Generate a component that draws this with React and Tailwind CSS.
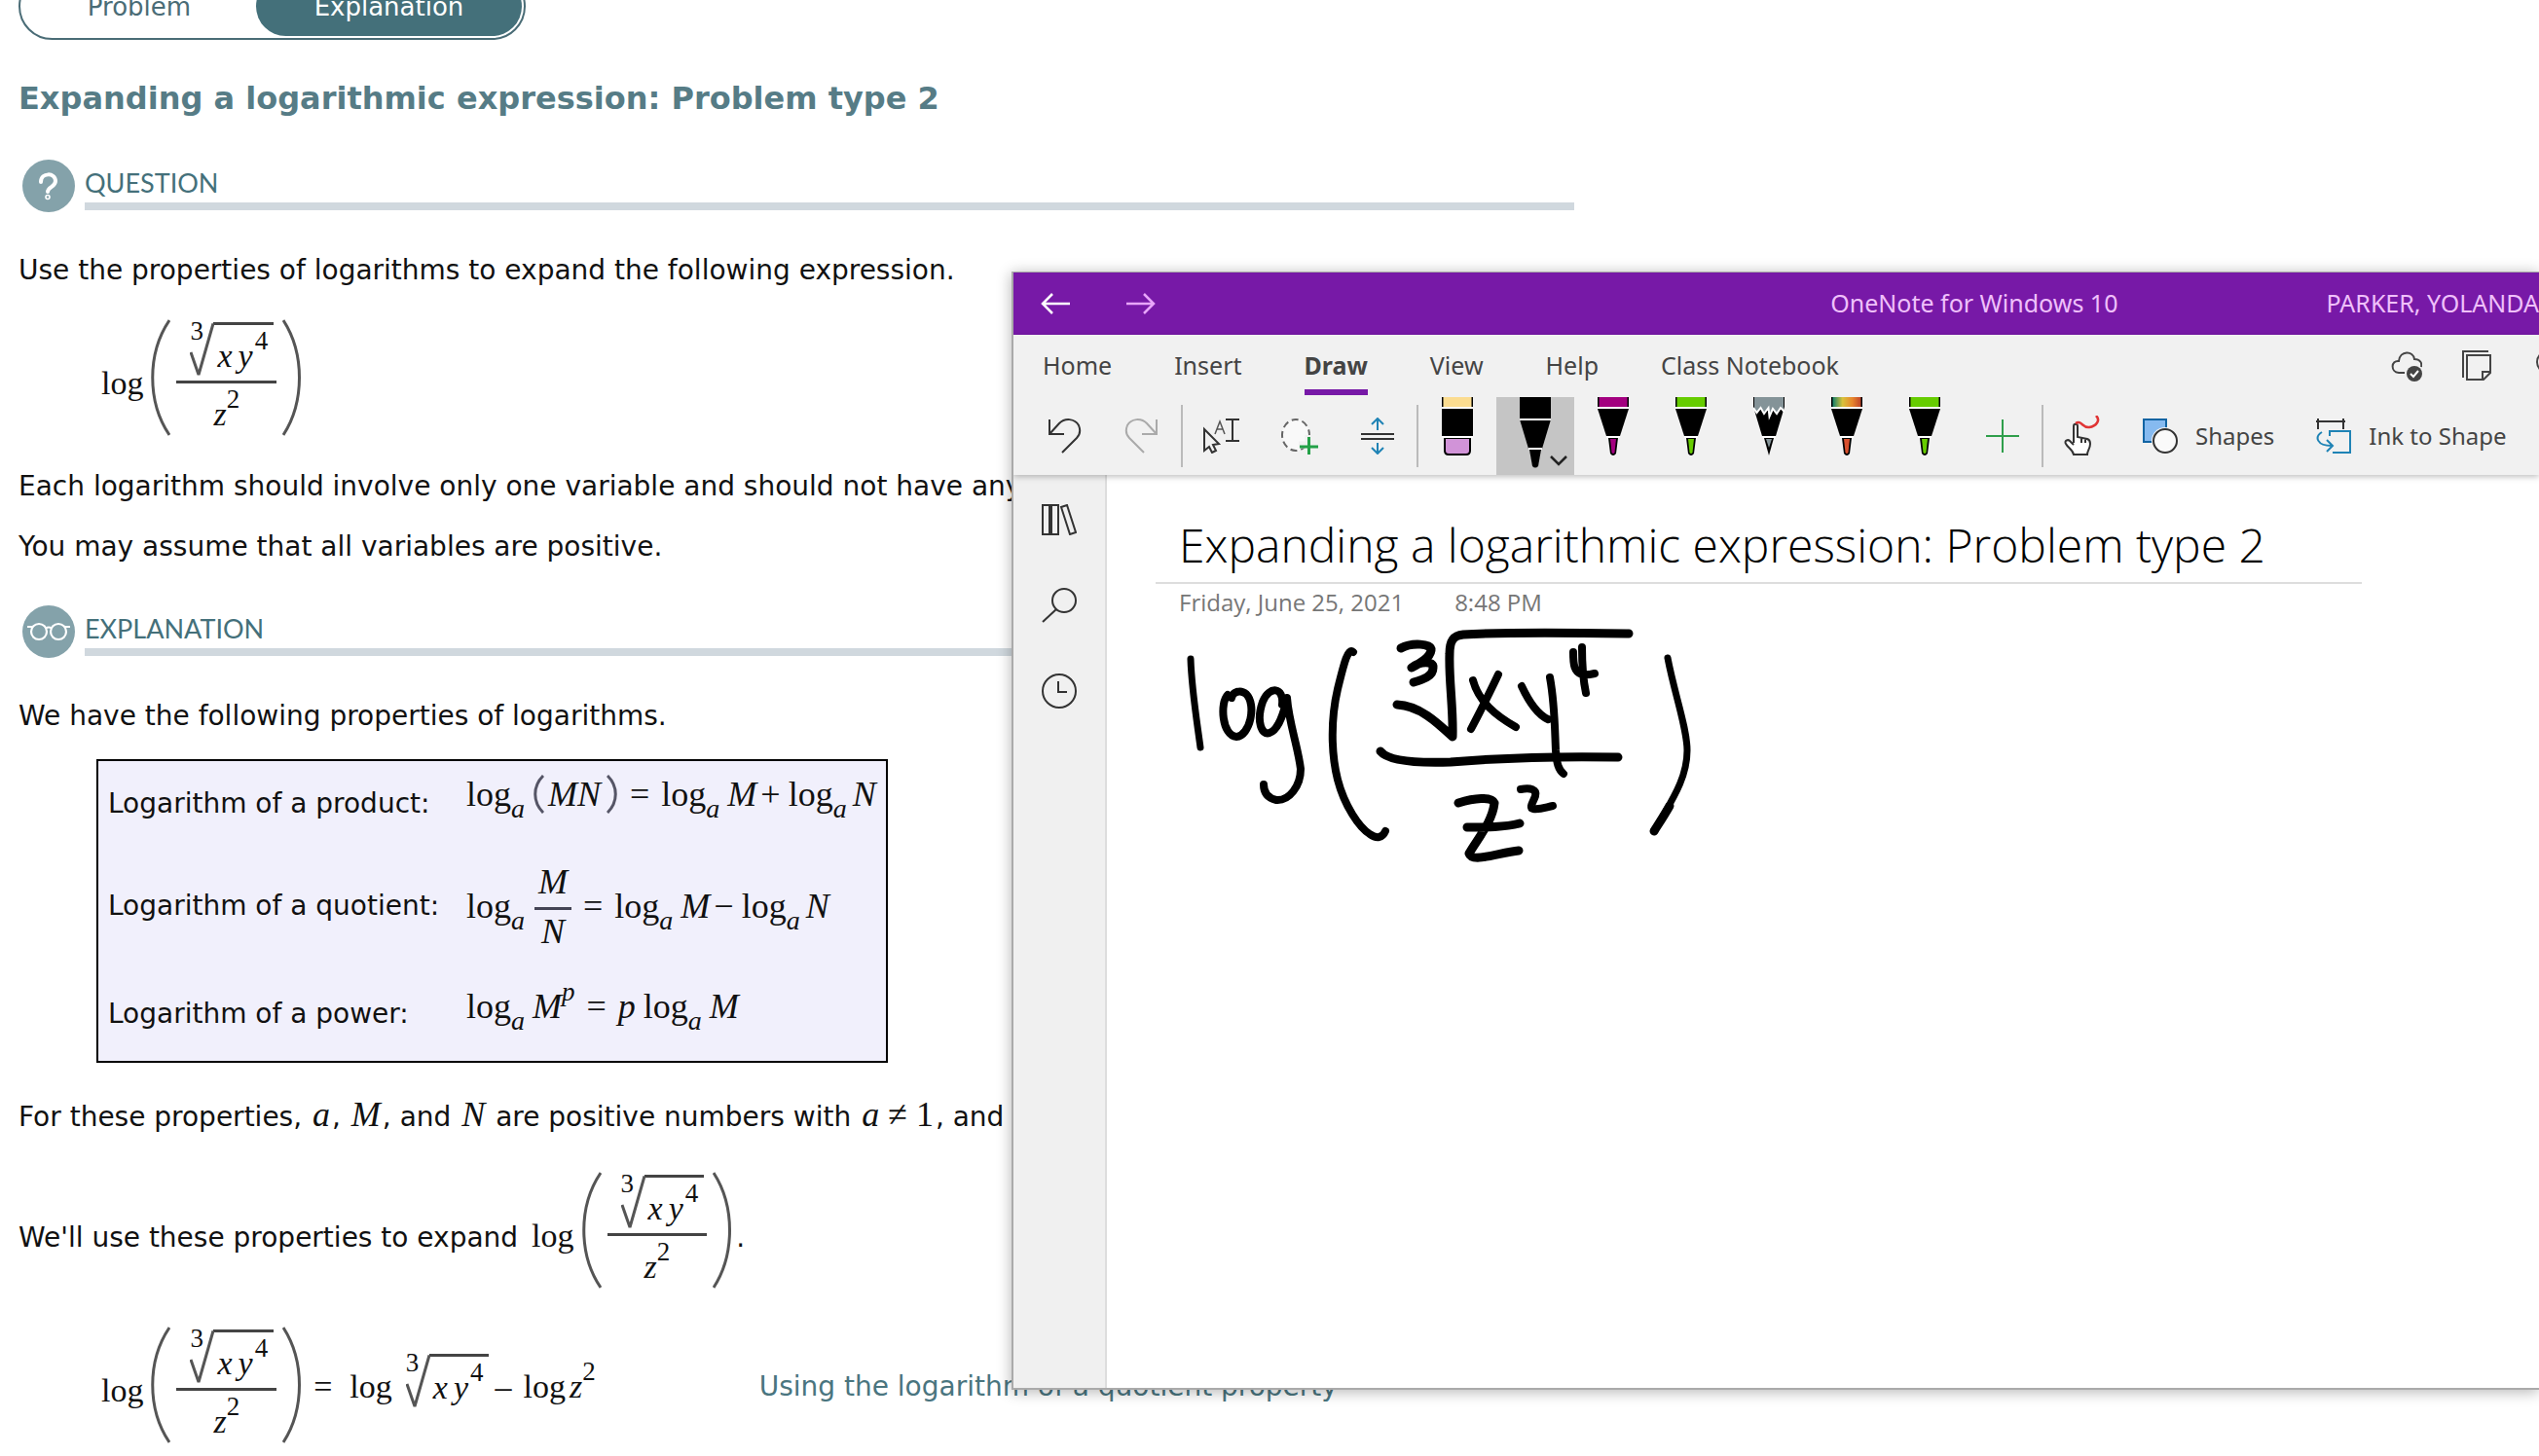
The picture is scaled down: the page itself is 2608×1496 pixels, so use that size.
// App.jsx
import React from 'react';

/* ---------- Math building blocks ---------- */

const Var = ({ children, className = '' }) => <i className={className}>{children}</i>;

const Sup = ({ children }) => (
  <sup className="static text-[27px] leading-[0] align-[18px]">{children}</sup>
);

const LogA = () => (
  <span>
    log<sub className="static text-[28px] leading-[0] align-[-12px] italic">a</sub>
  </span>
);

const Paren = ({ right = false }) => (
  <svg width="20" height="120" viewBox="0 0 20 120" fill="none" stroke="#555" strokeWidth="3" aria-hidden="true">
    <path d={right ? 'M1 1C23 35 23 85 1 119' : 'M19 1C-4 35 -4 85 19 119'} />
  </svg>
);

// Cube root of x y^4
const CubeRoot = () => (
  <span className="flex items-start">
    <span className="relative block w-6 shrink-0">
      <svg width="25" height="56" viewBox="0 0 25 56" fill="none" stroke="#555" strokeWidth="3" aria-hidden="true">
        <path d="M1 31L9 54L24 1.5" strokeLinejoin="bevel" />
      </svg>
      <span className="absolute left-0 -top-1 text-[27px] leading-none">3</span>
    </span>
    <span className="block border-t-3 border-[#444] pt-3 pl-1 pr-1.5 leading-10">
      <Var className="mr-1.5">x</Var>
      <Var className="mr-0.5">y</Var>
      <Sup>4</Sup>
    </span>
  </span>
);

const LogOfFraction = () => (
  <span className="flex items-center font-['Liberation_Serif',serif] text-[34px] leading-10">
    <span className="pt-3 mr-2">log</span>
    <Paren />
    <span className="mx-1.5 flex flex-col items-center">
      <span className="border-b-3 border-[#444] pl-3.5 pr-[3px] pb-1">
        <CubeRoot />
      </span>
      <span className="pt-3">
        <Var>z</Var>
        <Sup>2</Sup>
      </span>
    </span>
    <Paren right />
  </span>
);

/* ---------- Left page ---------- */

const SectionHeader = ({ icon, children }) => (
  <div className="mt-10 ml-1 flex max-w-[1594px] items-end gap-2.5">
    <svg width="54" height="54" viewBox="0 0 54 54" className="shrink-0" aria-hidden="true">
      <circle cx="27" cy="27" r="27" fill="#84a2aa" />
      {icon}
    </svg>
    <div className="mb-0.5 grow border-b-8 border-[#d0d8de]">
      <h2 className="pb-1 font-['Lato',sans-serif] text-[27px] leading-8 text-[#44707a]">{children}</h2>
    </div>
  </div>
);

const QuestionMark = (
  <g fill="none" stroke="#fff" strokeWidth="4" strokeLinecap="round">
    <path d="M19 23C19 13 34 13 34 22C34 28 26 28 26 33" />
    <circle cx="26" cy="38.500" r="0.800" />
  </g>
);

const Glasses = (
  <g fill="none" stroke="#fff" strokeWidth="2.2">
    <circle cx="17" cy="27" r="8" />
    <circle cx="37" cy="27" r="8" />
    <path d="M5 22H11M43 22H49M24 23.500Q27 21.500 30 23.500" />
  </g>
);

const PropertiesTable = () => (
  <table className="mt-6 ml-20 w-[813px] table-fixed border-2 border-black bg-[#f1f0fc]">
    <tbody className="[&_td]:font-['Liberation_Serif',serif] [&_td]:text-[36px] [&_th]:w-[379px] [&_th]:pl-[10px] [&_th]:text-left [&_th]:font-normal">
      <tr className="h-[88px]">
        <th scope="row">Logarithm of a product:</th>
        <td className="pb-5">
          <span className="flex items-center leading-10 whitespace-nowrap">
            <LogA />
            <svg width="12" height="40" viewBox="0 0 12 40" className="ml-2 mr-1" fill="none" stroke="#556" strokeWidth="3" aria-hidden="true">
              <path d="M11 1C0 12 0 28 11 39" />
            </svg>
            <Var>MN</Var>
            <svg width="12" height="40" viewBox="0 0 12 40" className="ml-1.5" fill="none" stroke="#556" strokeWidth="3" aria-hidden="true">
              <path d="M1 1C12 12 12 28 1 39" />
            </svg>
            <span className="mx-3">=</span>
            <LogA />
            <Var className="ml-2">M</Var>
            <span className="ml-1 mr-2">+</span>
            <LogA />
            <Var className="ml-1.5">N</Var>
          </span>
        </td>
      </tr>
      <tr className="h-[124px]">
        <th scope="row">Logarithm of a quotient:</th>
        <td>
          <span className="flex items-center leading-10 whitespace-nowrap">
            <LogA />
            <span className="ml-2.5 flex flex-col items-center">
              <Var className="border-b-3 border-[#445] px-1 pb-1.5">M</Var>
              <Var className="pt-0.5">N</Var>
            </span>
            <span className="mx-3">=</span>
            <LogA />
            <Var className="ml-2">M</Var>
            <span className="ml-1 mr-2">−</span>
            <LogA />
            <Var className="ml-1.5">N</Var>
          </span>
        </td>
      </tr>
      <tr className="h-[98px]">
        <th scope="row">Logarithm of a power:</th>
        <td className="pb-4">
          <span className="flex items-center leading-10 whitespace-nowrap">
            <LogA />
            <span className="ml-2 italic">
              M<Sup>p</Sup>
            </span>
            <span className="mx-3">=</span>
            <Var className="mr-2">p</Var>
            <LogA />
            <Var className="ml-2">M</Var>
          </span>
        </td>
      </tr>
    </tbody>
  </table>
);

const Serif = ({ children }) => (
  <span className="mx-0.5 font-['Liberation_Serif',serif] text-[36px] leading-[0]">{children}</span>
);

const LessonPage = () => (
  <main className="px-[19px] pb-3 font-['DejaVu_Sans',sans-serif] text-[28px] leading-10 text-[#111]">
    <nav className="-mt-7 flex h-[69px] w-[521px] rounded-full border-2 border-[#4a6c76] p-0.5 text-[26px]">
      <button type="button" className="grow text-[#4a6c76]">Problem</button>
      <button type="button" className="w-[273px] rounded-full bg-[#44707a] text-white">Explanation</button>
    </nav>

    <h1 className="mt-10 pb-[3px] text-[32px] font-bold text-[#567c86]">
      Expanding a logarithmic expression: Problem type 2
    </h1>

    <SectionHeader icon={QuestionMark}>QUESTION</SectionHeader>
    <p className="mt-10">Use the properties of logarithms to expand the following expression.</p>
    <div className="mt-[30px] ml-[85px]">
      <LogOfFraction />
    </div>
    <p className="mt-8">
      Each logarithm should involve only one variable and should not have any radicals or exponents.
    </p>
    <p className="mt-[22px]">You may assume that all variables are positive.</p>

    <SectionHeader icon={Glasses}>EXPLANATION</SectionHeader>
    <p className="mt-10">We have the following properties of logarithms.</p>
    <PropertiesTable />
    <p className="mt-9">
      For these properties, <Serif><i>a</i></Serif>, <Serif><i>M</i></Serif>, and <Serif><i>N</i></Serif> are
      positive numbers with <Serif><i>a</i> ≠ 1</Serif>, and <Serif><i>p</i></Serif> is any real number.
    </p>
    <div className="mt-9 flex items-center">
      <span className="mr-3.5 pt-4">We'll use these properties to expand</span>
      <LogOfFraction />
      <span className="ml-1 pt-4">.</span>
    </div>
    <div className="mt-[39px] ml-[85px] flex items-center">
      <LogOfFraction />
      <span className="flex items-center pt-1 font-['Liberation_Serif',serif] text-[34px]">
        <span className="ml-3 mr-[18px]">=</span>
        <span className="mr-3.5">log</span>
        <span className="pb-3">
          <CubeRoot />
        </span>
        <span className="ml-1.5 mr-3">–</span>
        <span>
          log<Var className="ml-1">z</Var>
          <Sup>2</Sup>
        </span>
      </span>
      <span className="ml-[168px] pt-1 text-[#4a757f]">Using the logarithm of a quotient property</span>
    </div>
  </main>
);

/* ---------- OneNote window ---------- */

const menuTabs = ['Home', 'Insert', 'Draw', 'View', 'Help', 'Class Notebook'];

const pens = [
  { id: 'Magenta pen', cap: '#a3007f', tip: '#a3007f' },
  { id: 'Green pen', cap: '#66cc00', tip: '#66cc00' },
  { id: 'Pencil', cap: '#849398', tip: '#849398', pencil: true },
  { id: 'Rainbow pen', cap: 'url(#rainbow)', tip: '#d8502e' },
  { id: 'Lime pen', cap: '#66cc00', tip: '#66cc00' },
];

const Pen = ({ pen }) => (
  <svg width="32" height="60" viewBox="0 0 32 60" aria-hidden="true">
    <defs>
      <linearGradient id="rainbow">
        <stop offset="0" stopColor="#12806a" />
        <stop offset="0.350" stopColor="#d9c23a" />
        <stop offset="0.700" stopColor="#e8852c" />
        <stop offset="1" stopColor="#c0442a" />
      </linearGradient>
    </defs>
    <path d="M0 0H32V10H0Z" fill="#000" />
    <path d="M1.500 0H30.500V10H1.500Z" fill={pen.cap} />
    {pen.pencil ? (
      <>
        <path d="M0 10H32L23 40H9Z" fill="#000" />
        <path d="M1 0H31V15L28 11L24 17L20 12L16.500 20L15.500 11L11 17L7.500 11L3.500 16L1 12Z" fill={pen.cap} />
        <path d="M0 11L3.500 16L7.500 11L11 17L15.500 11L16.500 20L20 12L24 17L28 11L32 15" fill="none" stroke="#fff" strokeWidth="2" />
        <path d="M11 42H21L16 60Z" fill="#000" />
        <path d="M13 43H19L16 52Z" fill={pen.tip} />
      </>
    ) : (
      <>
        <path d="M0 12H32L23 40H9Z" fill="#000" />
        <path d="M11 42H21L19 58Q16 62 13 58Z" fill="#000" />
        <path d="M13 43H19L17.500 57Q16 59 14.500 57Z" fill={pen.tip} />
      </>
    )}
    <path d="M9 41H23" stroke="#fff" strokeWidth="2" />
    {!pen.pencil && <path d="M0 11H32" stroke="#fff" strokeWidth="2" />}
  </svg>
);

const ToolButton = ({ label, children, className = 'items-center' }) => (
  <button type="button" aria-label={label} className={`flex h-20 w-20 shrink-0 justify-center ${className}`}>
    {children}
  </button>
);

const Divider = () => <span className="mt-2 h-16 w-0.5 shrink-0 bg-[#bbb]" />;

const Icon = ({ w = 36, h = 36, children }) => (
  <svg
    width={w}
    height={h}
    viewBox={`0 0 ${w} ${h}`}
    fill="none"
    stroke="#333"
    strokeWidth="2"
    className="shrink-0"
    aria-hidden="true"
  >
    {children}
  </svg>
);

const TitleBar = () => (
  <header className="flex h-16 items-center bg-[#7719a7] pl-7 text-[25px] text-[#efc0fb]">
    <button type="button" aria-label="Back">
      <Icon w={30} h={24}>
        <path d="M30 12H2M12 2L2 12L12 22" stroke="#fff" strokeWidth="2.500" />
      </Icon>
    </button>
    <button type="button" aria-label="Forward" className="ml-[58px]">
      <Icon w={30} h={24}>
        <path d="M0 12H28M18 2L28 12L18 22" stroke="#e8a6fa" strokeWidth="2.500" />
      </Icon>
    </button>
    <span className="ml-auto">OneNote for Windows 10</span>
    <span className="ml-[214px]">PARKER, YOLANDA</span>
  </header>
);

const MenuRow = () => (
  <div className="flex h-16 items-start overflow-hidden pl-[30px] text-[25px] text-[#444]">
    <nav className="flex gap-16">
      {menuTabs.map((tab) => (
        <button
          key={tab}
          type="button"
          className={
            tab === 'Draw'
              ? 'h-[62px] border-t-8 border-b-6 border-t-transparent border-b-[#7719a7] font-bold'
              : 'h-[62px] border-t-8 border-b-6 border-transparent'
          }
        >
          {tab}
        </button>
      ))}
    </nav>
    <div className="ml-auto flex gap-10 pt-4">
      <button type="button" aria-label="Sync status">
        <Icon w={32} h={32}>
          <path d="M14 23H8C-1 22 0 10 8 11C9 0 23 0 24 9C30 9 32 13 31 17" stroke="#444" />
          <circle cx="24" cy="24" r="8" fill="#444" stroke="none" />
          <path d="M20 24L23 27L28 21" stroke="#fff" />
        </Icon>
      </button>
      <button type="button" aria-label="Full page view">
        <Icon w={32} h={32}>
          <path d="M2 28V1H28" stroke="#444" />
          <path d="M6 5H30V23L23 30H6ZM30 22H22V30" stroke="#444" />
        </Icon>
      </button>
      <button type="button" aria-label="Tips" className="ml-1 -mr-7">
        <Icon w={32} h={32}>
          <circle cx="13" cy="12" r="11" stroke="#444" />
        </Icon>
      </button>
    </div>
  </div>
);

const DrawToolbar = () => (
  <div className="flex h-20 overflow-hidden pl-3 text-[24px] text-[#444]">
    <ToolButton label="Undo">
      <Icon>
        <path d="M3 1V16H18M3 16L13 5C19 -1 29 0 33 7C35 12 34 17 31 20L16 35" />
      </Icon>
    </ToolButton>
    <ToolButton label="Redo">
      <Icon>
        <path d="M33 1V16H18M33 16L23 5C17 -1 7 0 3 7C1 12 2 17 5 20L20 35" stroke="#aaa" />
      </Icon>
    </ToolButton>
    <Divider />
    <ToolButton label="Select objects or type text">
      <Icon w={38}>
        <path d="M1 11V33L6 29L9 35L13 33L10 27L16 26Z" />
        <path d="M12 16L17 3L22 16M14 11H20" stroke="#555" strokeWidth="1.500" />
        <path d="M23 1H37M23 23H37M30 1V23" />
      </Icon>
    </ToolButton>
    <ToolButton label="Lasso select">
      <Icon w={38} h={38}>
        <ellipse cx="15" cy="18" rx="14" ry="16" fill="#f9f9f9" stroke="#666" strokeDasharray="7 4" />
        <path d="M18 28H38M28 18V38" stroke="#f1f1f1" strokeWidth="7" />
        <path d="M19 30H38M28.500 20V38" stroke="#24a148" strokeWidth="3" />
      </Icon>
    </ToolButton>
    <ToolButton label="Insert or remove space">
      <Icon w={34} h={38}>
        <path d="M0 17H34M0 22H34" />
        <path d="M17 13V1M11 7L17 1L23 7M17 26V37M11 31L17 37L23 31" stroke="#1f83b5" />
      </Icon>
    </ToolButton>
    <Divider />
    <ToolButton label="Eraser" className="items-start">
      <svg width="32" height="60" viewBox="0 0 32 60" aria-hidden="true">
        <path d="M0 0H32V10H0ZM0 12H32V40H0Z" fill="#000" />
        <path d="M1.500 0H30.500V10H1.500Z" fill="#fbdc90" />
        <path d="M3 42H29V55Q29 59 25 59H7Q3 59 3 55Z" fill="#d193d8" stroke="#000" strokeWidth="2" />
        <path d="M0 11H32M0 41H32" stroke="#fff" strokeWidth="2" />
      </svg>
    </ToolButton>
    <ToolButton label="Black pen" className="items-start bg-[#c5c5c5]">
      <svg width="80" height="80" viewBox="0 0 80 80" aria-hidden="true">
        <path d="M24 0H56V23L47 53H33L24 23Z" fill="#000" />
        <path d="M34 54H46L43 71Q40 74 37 71Z" fill="#000" />
        <path d="M24 23H56M33 53H47" stroke="#fff" strokeWidth="2" />
        <path d="M56 61L64 69L72 61" fill="none" stroke="#222" strokeWidth="2.500" />
      </svg>
    </ToolButton>
    {pens.map((pen) => (
      <ToolButton key={pen.id} label={pen.id} className="items-start">
        <Pen pen={pen} />
      </ToolButton>
    ))}
    <ToolButton label="Add pen">
      <Icon w={34} h={34}>
        <path d="M0 17H34M17 0V34" stroke="#2f9e4b" />
      </Icon>
    </ToolButton>
    <Divider />
    <ToolButton label="Draw with touch">
      <Icon w={38} h={42}>
        <path
          d="M10 28V11C10 8 14 8 14 11V22L24 24C27 25 27 27 27 29C27 34 24 36 24 40H10C9 35 4 33 2 29C0 26 4 24 6 26L10 30M18 23V28M22 24V28"
          fill="#fff"
        />
        <path d="M12 8C18 4 19 13 26 12C33 11 38 5 33 0" stroke="#e03434" strokeWidth="2.500" />
      </Icon>
    </ToolButton>
    <button type="button" className="ml-[22px] flex items-center gap-[18px]">
      <Icon>
        <path d="M1 1H24V24H1Z" fill="#86baf0" stroke="#1264a3" />
        <circle cx="23" cy="23" r="14" fill="#f1f1f1" stroke="none" />
        <circle cx="23" cy="23" r="12" fill="#fafafa" />
      </Icon>
      Shapes
    </button>
    <button type="button" className="ml-[43px] flex items-center gap-[18px] whitespace-nowrap">
      <Icon>
        <path d="M0 3H30M2 0V11M28 0V11" />
        <path d="M14 18V13H35V35H17M6 14C-2 19 1 28 16 28M11 22L17 28L11 34" stroke="#1f83b5" />
      </Icon>
      Ink to Shape
    </button>
  </div>
);

const SideRail = () => (
  <aside className="w-24 shrink-0 border-r-2 border-[#ddd] bg-[#f0f0f0] pt-0.5">
    <button type="button" aria-label="Show notebooks" className="flex h-[88px] w-full items-center justify-center">
      <Icon w={36} h={32}>
        <path d="M1 1H8V31H1ZM10 1H17V31H10ZM20 3L26 1L35 29L29 31Z" />
      </Icon>
    </button>
    <button type="button" aria-label="Search" className="flex h-[88px] w-full items-center justify-center">
      <Icon>
        <circle cx="23" cy="13" r="12" />
        <path d="M15 22L1 35" />
      </Icon>
    </button>
    <button type="button" aria-label="Recent notes" className="flex h-[88px] w-full items-center justify-center">
      <Icon>
        <circle cx="18" cy="18" r="17" />
        <path d="M17 8V19H26" />
      </Icon>
    </button>
  </aside>
);

// Handwritten strokes on the note canvas
const ink = [
  { w: 7, d: 'M23 39C24 70 29 100 33 130' },
  { w: 8, d: 'M61 76C53 84 55 118 70 119C84 118 91 86 80 75C74 70 66 73 65 79' },
  { w: 8, d: 'M117 86C119 68 104 66 97 83C90 103 96 118 104 115C113 112 119 94 122 79C124 105 133 128 136 152C136 170 124 185 111 184C102 182 98 176 98 168' },
  { w: 8, d: 'M190 32C184 27 180 46 174 70C167 100 167 135 174 163C181 190 196 212 207 219C214 224 220 223 223 216' },
  { w: 9, d: 'M239 28C250 22 271 23 270 30C269 38 258 44 250 48C259 41 273 41 272 48C272 57 262 60 252 63' },
  { w: 9, d: 'M235 86C258 87 276 104 292 119C293 90 288 60 289 34C289 20 293 15 303 14C350 11 410 12 473 13' },
  { w: 8, d: 'M313 61C319 83 336 97 357 109M339 55C331 72 322 90 311 111' },
  { w: 8, d: 'M363 67C370 82 379 96 390 101M392 58C397 85 397 110 398 133C399 147 401 153 406 157' },
  { w: 8, d: 'M416 32C416 45 417 53 425 55C430 56 434 55 438 54M425 27C425 45 426 60 429 74' },
  { w: 9, d: 'M218 134C227 145 262 146 290 145C350 140 410 139 462 140' },
  { w: 9, d: 'M298 187C314 182 332 180 335 187C333 207 316 226 309 239C312 249 340 238 360 236M307 212C327 212 345 212 361 208' },
  { w: 8, d: 'M362 173C372 171 379 173 377 180C375 186 370 192 375 193C382 194 389 191 395 190' },
  { w: 7, d: 'M513 38C520 75 533 110 533 133C533 165 513 190 500 215' },
  { w: 9, d: 'M515 190C510 199 504 208 499 216' },
];

const NoteCanvas = () => (
  <section className="grow bg-white pt-[37px] pl-[50px] font-['Open_Sans','Noto_Sans',sans-serif]">
    <h2 className="w-[1239px] border-b-2 border-[#ddd] pb-[3px] pl-6 text-[48px] leading-[70px] font-light text-black">
      Expanding a logarithmic expression: Problem type 2
    </h2>
    <p className="flex gap-[52px] pl-6 text-[24px] leading-[38px] text-[#767676]">
      <span>Friday, June 25, 2021</span>
      <span>8:48 PM</span>
    </p>
    <svg
      width="560"
      height="260"
      viewBox="0 0 560 260"
      className="ml-[13px]"
      fill="none"
      stroke="#000"
      strokeLinecap="round"
      strokeLinejoin="round"
      role="img"
      aria-label="Handwritten formula"
    >
      {ink.map((stroke) => (
        <path key={stroke.d} d={stroke.d} strokeWidth={stroke.w} />
      ))}
    </svg>
  </section>
);

const OneNoteWindow = () => (
  <div className="absolute top-[279px] right-0 left-[1039px] flex h-[1149px] flex-col overflow-hidden border-t border-b-2 border-l-2 border-[#aaa] bg-white font-['Noto_Sans',sans-serif] shadow-[0_2px_14px_rgba(0,0,0,0.3)]">
    <TitleBar />
    <div className="relative bg-[#f1f1f1] shadow-[0_2px_6px_rgba(0,0,0,0.25)]">
      <MenuRow />
      <DrawToolbar />
    </div>
    <div className="flex grow">
      <SideRail />
      <NoteCanvas />
    </div>
  </div>
);

const App = () => (
  <div className="relative min-h-screen overflow-hidden bg-white">
    <LessonPage />
    <OneNoteWindow />
  </div>
);

export default App;
